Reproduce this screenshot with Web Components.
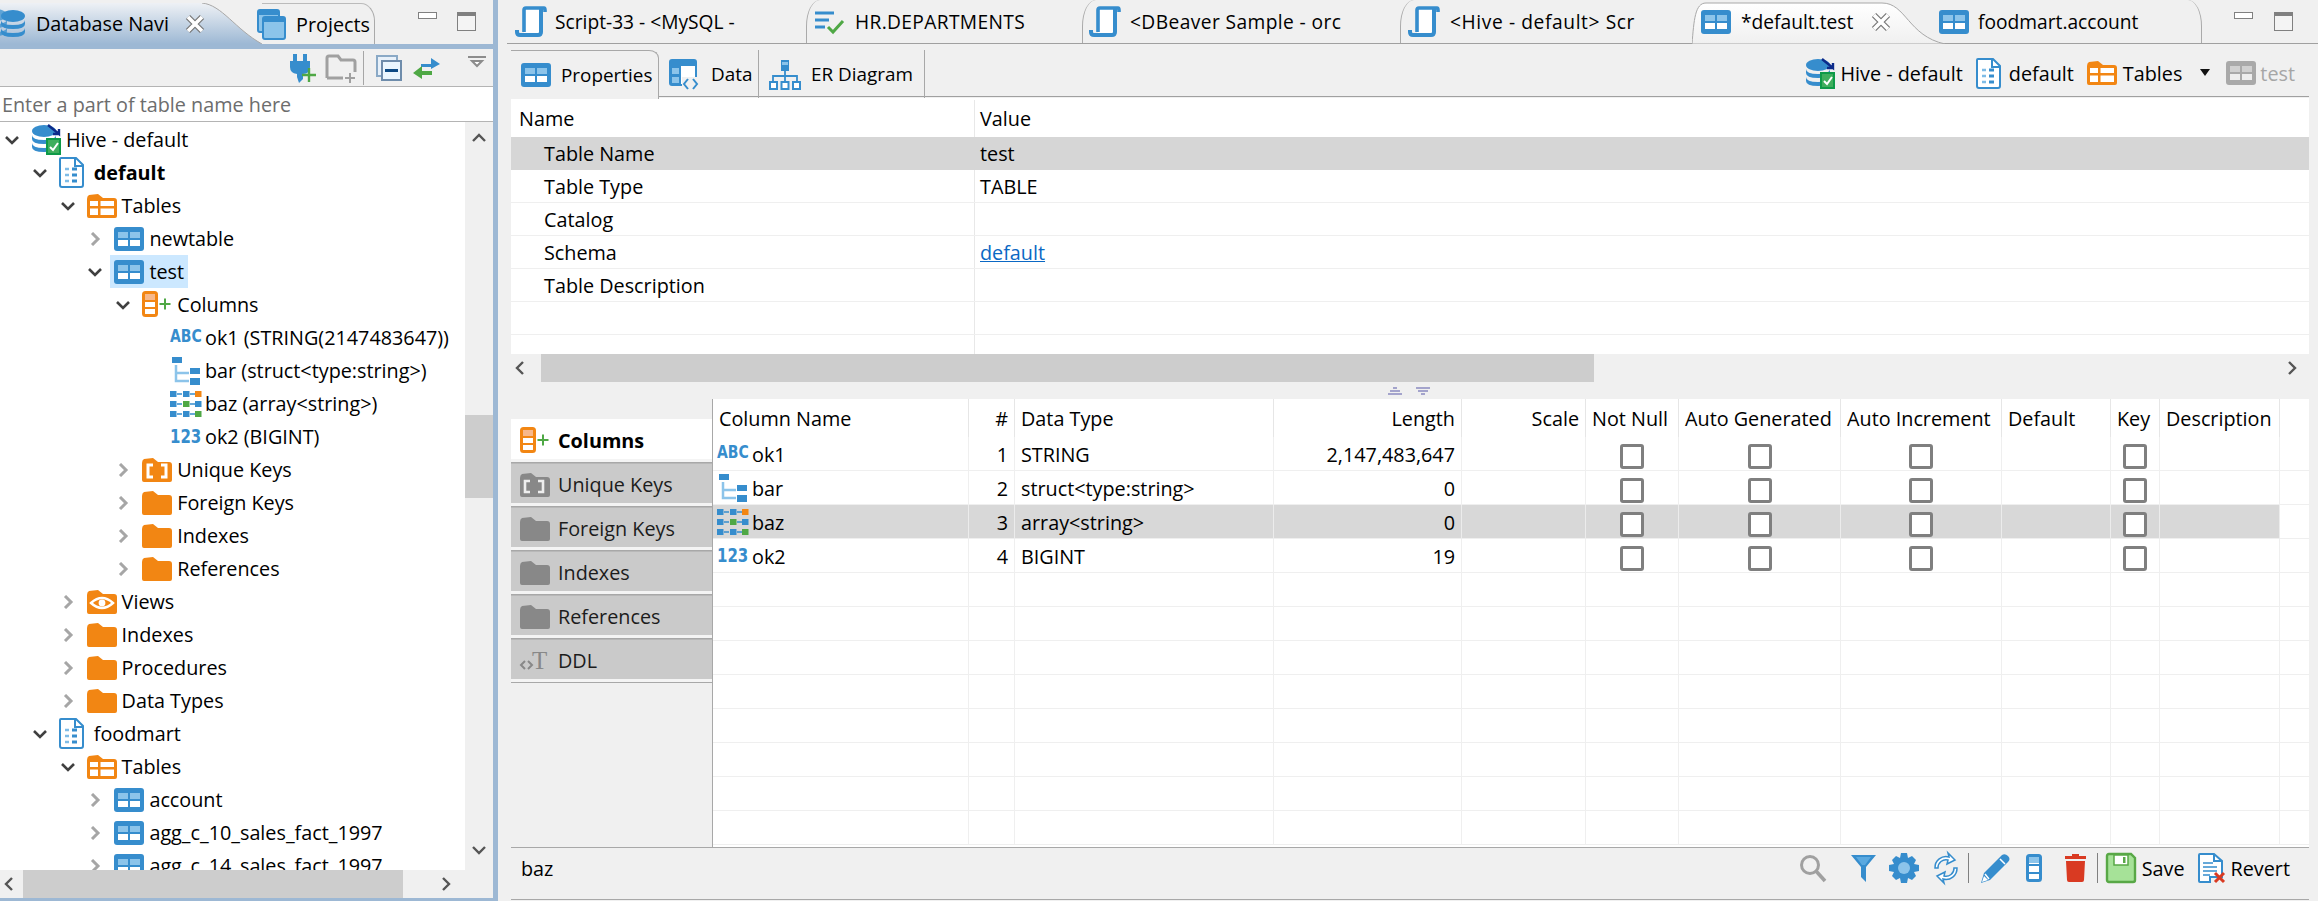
<!DOCTYPE html>
<html>
<head>
<meta charset="utf-8">
<style>
  html, body { margin:0; padding:0; }
  body {
    width:2318px; height:901px; overflow:hidden; display:flex;
    background:#f0f0f0; color:#000;
    font-family:"Open Sans","Noto Sans","Liberation Sans",sans-serif;
    font-size:19.8px;
  }
</style>
</head>
<body>
<nav-pane></nav-pane>
<editor-pane></editor-pane>

<script>
// icons: [width, height, markup]
const B = '#368dcd', O = '#f28613', G = '#4fa845';
const tableCells = (top, bottom) => `<rect x="4" y="5" width="10" height="6" fill="${top}"/><rect x="16" y="5" width="10" height="6" fill="${top}"/><rect x="4" y="13" width="10" height="6" fill="${bottom}"/><rect x="16" y="13" width="10" height="6" fill="${bottom}"/>`;
const folder = c => `<path d="M0 5Q0 2 2 1L11 0L16 4H27Q30 4 30 7V22Q30 24 28 24H2Q0 24 0 22Z" fill="${c}"/>`;
const stack = `<rect x="1.5" y="1.5" width="13" height="23" rx="2" fill="#fff" stroke="${O}" stroke-width="3"/><rect x="3" y="3" width="10" height="6" fill="#f7b88a"/><rect x="2" y="9" width="12" height="2" fill="${O}"/><rect x="2" y="16" width="12" height="2" fill="${O}"/>`;
const plus = (x, y, c, s=11, w=2) => `<path d="M${x-s/2} ${y}H${x+s/2}M${x} ${y-s/2}V${y+s/2}" stroke="${c}" stroke-width="${w}" fill="none"/>`;
const cyl = `<ellipse cx="13" cy="7" rx="12" ry="6" fill="${B}"/><path d="M1 11Q1 16 13 16T25 11V15Q25 20 13 20T1 15ZM1 19Q1 24 13 24T25 19V23Q25 28 13 28T1 23Z" fill="${B}"/>`;
const db = cyl + `<path d="M17 1L28 10V5M28 10H22" stroke="#0c2a8a" stroke-width="2.4" fill="none"/><rect x="16" y="15" width="13" height="15" fill="#3fae5d" stroke="#0e9a48" stroke-width="2"/><path d="M19 23l3 3 5-7" stroke="#fff" stroke-width="2" fill="none"/>`;
const doc = `<path d="M2 1H17L24 8V28Q24 30 22 30H3Q1 30 1 28V2Q1 1 2 1Z" fill="#fff" stroke="${B}" stroke-width="2"/><path d="M16 1V9H24" fill="none" stroke="${B}" stroke-width="2"/><path d="M6 12H10M6 18H10M6 24H10" stroke="#7fbce6" stroke-width="2.5"/><path d="M13 12H18M13 18H18M13 24H18" stroke="${B}" stroke-width="3"/>`;
const script = `<path d="M8 4Q8 2 10 2H27V29H8Z" fill="#fff"/><path d="M8 26V4Q8 2 10 2H28Q29 2 29 4V6" fill="none" stroke="${B}" stroke-width="3.6"/><path d="M25 3V26Q25 29 22 29H4Q1 29 1 26V24" fill="none" stroke="${B}" stroke-width="4"/>`;

const ICONS = {
  table:[30,24,`<rect width="30" height="24" rx="3" fill="${B}"/>`+tableCells('#8cc4ea','#fff')],
  tableGray:[30,24,`<rect width="30" height="24" rx="3" fill="#a9a9a9"/>`+tableCells('#d0d0d0','#eee')],
  folder:[30,24,folder(O)],
  folderGray:[28,24,folder('#888')],
  tables:[30,24,folder(O)+`<rect x="3" y="7" width="24" height="14" fill="#fff"/><rect x="3" y="12" width="24" height="2.5" fill="${O}"/><rect x="11" y="7" width="2.5" height="14" fill="${O}"/>`],
  views:[30,24,folder(O)+`<path d="M4 13Q15 3 26 13Q15 23 4 13Z" fill="none" stroke="#fff" stroke-width="2.4"/><circle cx="15" cy="13" r="3.4" fill="#fff"/>`],
  unique:[30,24,folder(O)+`<path d="M11 7H6V19H11M19 7H24V19H19" fill="none" stroke="#fff" stroke-width="3"/>`],
  uniqueGray:[28,24,folder('#888')+`<path d="M10 8H5V19H10M18 8H23V19H18" fill="none" stroke="#eee" stroke-width="2.6"/>`],
  columns:[30,27,stack+plus(23,13,G)],
  db:[30,31,db],
  dbPlain:[36,31,`<g transform="translate(-8,0)" fill-opacity=".75">${cyl}</g><g transform="translate(10,1)">${cyl}</g>`],
  doc:[25,31,doc],
  abc:[32,20,`<text transform="scale(1,1.3)" x="0" y="10.8" font-family="DejaVu Sans,sans-serif" font-weight="700" font-size="14" fill="${B}">ABC</text>`],
  num:[32,22,`<text transform="scale(1,1.25)" x="0" y="13.6" font-family="DejaVu Sans,sans-serif" font-weight="700" font-size="15" fill="${B}">123</text>`],
  struct:[30,28,`<rect x="2" y="0" width="10" height="6" fill="${B}"/><path d="M6 8V24H19M6 16H19" stroke="#8cc4ea" stroke-width="2.5" fill="none"/><rect x="20" y="11" width="10" height="6" fill="${B}"/><rect x="20" y="21" width="10" height="7" fill="${B}"/>`],
  array:[32,26,[0,10,20].map((y,i)=>[0,13,25].map((x,j)=>`<rect x="${x}" y="${y}" width="6.5" height="6" fill="${(i==0&&j==2)?O:(i==1&&j==1)||(i==2&&j==2)?G:B}"/>`).join('')+`<path d="M7 ${y+3}H12M20 ${y+3}H25" stroke="${B}" stroke-width="1.6"/>`).join('')],
  plug:[27,30,`<path d="M5 1V8M15 1V8" stroke="${B}" stroke-width="4"/><path d="M0 8H20V14Q20 21 13 21V26L9 30L7 24V21Q0 20 0 14Z" fill="${B}"/>`+plus(19,22,G,14,2.4)],
  folderAdd:[32,28,`<path d="M2 24V4Q2 2 4 2H13L16 6H28Q30 6 30 8V18M2 24H18" fill="none" stroke="#a0a0a0" stroke-width="3"/>`+plus(25,24,'#a0a0a0',10,2)],
  collapse:[26,26,`<rect x="1" y="1" width="20" height="20" fill="#e8f1fa" stroke="#8aa9c6" stroke-width="2"/><rect x="6" y="6" width="19" height="19" fill="#eaf6fe" stroke="#6e8cab" stroke-width="2"/><rect x="9" y="14" width="13" height="3" fill="#0d4a84"/>`],
  link:[30,22,`<path d="M10 8H20V2L29 8L20 13V11H10Z" fill="${B}" transform="translate(-1,-1)"/><path d="M20 14H10V9L1 16L10 22V18H20Z" fill="${G}"/>`],
  hdr:[18,10,`<path d="M0 1H18M4 5H14L9 10Z" stroke="#8c8c8c" stroke-width="2" fill="#fff"/>`],
  hrcheck:[32,24,`<path d="M1 3H20M1 10H15M1 17H11" stroke="${B}" stroke-width="3"/><path d="M14 17l5 5 10-11" stroke="${G}" stroke-width="3" fill="none"/>`],
  script:[30,31,script],
  projects:[29,31,`<rect x="1" y="1" width="21" height="22" rx="2" fill="#8cc4ea" stroke="${B}" stroke-width="2"/><rect x="1" y="1" width="21" height="5" fill="${B}"/><rect x="6" y="8" width="22" height="22" rx="2" fill="#8cc4ea" stroke="${B}" stroke-width="2"/><rect x="6" y="8" width="22" height="5" fill="${B}"/>`],
  data:[30,31,`<rect x="1" y="1" width="26" height="25" rx="2" fill="#fff" stroke="${B}" stroke-width="2"/><rect x="1" y="1" width="26" height="6" fill="${B}"/><rect x="1" y="1" width="11" height="25" fill="${B}"/><rect x="3" y="9" width="7" height="6" fill="#8cc4ea"/><rect x="3" y="18" width="7" height="6" fill="#8cc4ea"/><rect x="13" y="18" width="17" height="13" fill="#f0f0f0"/><path d="M19 20l-4 5 4 5M24 20l4 5-4 5" fill="none" stroke="${B}" stroke-width="2"/>`],
  er:[32,31,`<path d="M12 1H20V12H12Z" fill="${B}"/><path d="M13 3H19V6H13Z" fill="#8cc4ea"/><path d="M16 12V17M4 23V17H28V23M16 17V23" stroke="${B}" stroke-width="1.8" fill="none"/>`+[0,11.5,23].map(x=>`<rect x="${x+1}" y="23" width="7" height="7" fill="#fff" stroke="${B}" stroke-width="2"/>`).join('')],
  close:[20,20,`<path d="M3 3L17 17M17 3L3 17" stroke="#777" stroke-width="6"/><path d="M3 3L17 17M17 3L3 17" stroke="#fff" stroke-width="3.6"/>`],
  search:[27,28,`<circle cx="11" cy="11" r="8.5" fill="none" stroke="#a0a0a0" stroke-width="3"/><path d="M17 17L26 27" stroke="#a0a0a0" stroke-width="3.6"/>`],
  filter:[25,28,`<path d="M0 1H25L15 13V28L10 23V13Z" fill="${B}"/><path d="M5 3H20L14 11H11Z" fill="#5aa9e0"/>`],
  gear:[30,30,`<path d="M12 0H18L19 5L23 3L27 7L25 11L30 12V18L25 19L27 23L23 27L19 25L18 30H12L11 25L7 27L3 23L5 19L0 18V12L5 11L3 7L7 3L11 5Z" fill="${B}"/><circle cx="15" cy="15" r="6" fill="#8cc4ea"/>`],
  refresh:[28,30,`<path d="M3 15A11 11 0 0 1 17 4L16 0L23 7L15 11L16 7A8 8 0 0 0 6 15Z M25 15A11 11 0 0 1 11 26L12 30L5 23L13 19L12 23A8 8 0 0 0 22 15Z" fill="#fff" stroke="${B}" stroke-width="1.5"/>`],
  pencil:[30,31,`<path d="M1 30L4 20L22 2Q25 0 28 3T28 9L10 27Z" fill="${B}"/><path d="M5 21L9 26M20 6L25 11" stroke="#fff" stroke-width="1.5"/><path d="M2 29L4 23L8 27Z" fill="#fff"/>`],
  columnBlue:[16,28,`<rect x="1.5" y="1.5" width="13" height="25" rx="2" fill="#fff" stroke="${B}" stroke-width="3"/><rect x="3" y="3" width="10" height="6" fill="#8cc4ea"/><rect x="2" y="10" width="12" height="2" fill="${B}"/><rect x="2" y="18" width="12" height="2" fill="${B}"/>`],
  trash:[21,28,`<rect x="0" y="2" width="21" height="3" fill="#d93a22"/><rect x="7" y="0" width="7" height="3" fill="#d93a22"/><path d="M1 7H20L19 26Q19 28 17 28H4Q2 28 2 26Z" fill="#d93a22"/>`],
  save:[30,30,`<path d="M1 3Q1 1 3 1H25L29 5V27Q29 29 27 29H3Q1 29 1 27Z" fill="#a6e298" stroke="#58a846" stroke-width="2.4"/><rect x="8" y="2" width="14" height="10" fill="#fff" stroke="#58a846" stroke-width="1.5"/><rect x="17" y="4" width="2.5" height="6" fill="#58a846"/>`],
  revert:[27,30,`<path d="M1 2Q1 1 2 1H16L24 8V24H12V29H2Q1 29 1 28Z" fill="#fff" stroke="${B}" stroke-width="2"/><path d="M16 1V8H24" fill="none" stroke="${B}" stroke-width="2"/><path d="M5 10H15M5 14H19M5 18H19M5 22H12" stroke="${B}" stroke-width="1.6"/><path d="M17 20L26 29M26 20L17 29" stroke="#d93a22" stroke-width="3"/>`],
  ddl:[28,22,`<path d="M5 11L1 15L5 19M8 11L12 15L8 19" fill="none" stroke="#888" stroke-width="2"/><text x="12" y="19" font-family="Liberation Serif,serif" font-size="25" fill="#888">T</text>`],
  sashUp:[14,8,`<path d="M0 7H14M2 4H12M5 1H9" stroke="#8a8ac0" stroke-width="1.5"/>`],
  sashDown:[14,8,`<path d="M0 1H14M2 4H12M5 7H9" stroke="#8a8ac0" stroke-width="1.5"/>`]
};

class DbIcon extends HTMLElement {
  connectedCallback() {
    const [w, h, body] = ICONS[this.getAttribute('name')];
    this.attachShadow({ mode:'open' });
    this.shadowRoot.innerHTML = `<style>:host{display:inline-flex;flex:none}svg{display:block;overflow:visible}</style>
      <svg width="${w}" height="${h}" viewBox="0 0 ${w} ${h}">${body}</svg>`;
  }
}
customElements.define('db-icon', DbIcon);

// tree row: level, twisty (open/closed), icon
class TreeRow extends HTMLElement {
  connectedCallback() {
    const lvl = +this.getAttribute('level');
    const tw = this.getAttribute('twisty');
    const sel = this.hasAttribute('selected');
    const arrow = tw == 'open'
      ? '<path d="M1 4L7 10L13 4" stroke="#404040" stroke-width="2.6" fill="none"/>'
      : tw == 'closed' ? '<path d="M4 1L10 7L4 13" stroke="#a6a6a6" stroke-width="3" fill="none"/>' : '';
    this.attachShadow({ mode:'open' });
    this.shadowRoot.innerHTML = `<style>
      :host{display:flex;align-items:center;height:33px;white-space:nowrap;padding-left:${5 + lvl * 27.8}px}
      .tw{width:14px;height:14px;margin-right:12px;flex:none}
      .ic{width:32px;display:flex;align-items:center;justify-content:flex-start;flex:none;margin-right:3px}
      .t{font-weight:${this.hasAttribute('bold')?700:400};padding:0}
      .w{display:flex;align-items:center;height:33px;${sel?'background:#cce8ff;margin-left:-4px;padding:0 4px;':''}}
    </style>
    <svg class="tw" viewBox="0 0 14 14">${arrow}</svg>
    <div class="w"><div class="ic"><db-icon name="${this.getAttribute('icon')}"></db-icon></div><span class="t"><slot></slot></span></div>`;
  }
}
customElements.define('tree-row', TreeRow);

class ScrollBar extends HTMLElement {
  connectedCallback() {
    const v = this.hasAttribute('vertical');
    const a = +this.getAttribute('start'), b = +this.getAttribute('end');
    this.attachShadow({ mode:'open' });
    const arrows = v
      ? ['M1 9L7 3L13 9','M1 3L7 9L13 3']
      : ['M9 1L3 7L9 13','M3 1L9 7L3 13'];
    this.shadowRoot.innerHTML = `<style>
      :host{display:block;position:relative;background:#f0f0f0;flex:none;${v?'width:28px':'height:28px'}}
      .thumb{position:absolute;background:#cdcdcd;${v?`left:0;right:0;top:${a}px;height:${b-a}px`:`top:0;bottom:0;left:${a}px;width:${b-a}px`}}
      svg{position:absolute;width:14px;height:14px}
      .one{${v?'top:10px;left:7px':'left:3px;top:7px'}}
      .two{${v?'bottom:12px;left:7px':`left:${this.getAttribute('arrow')}px;top:7px`}}
    </style><div class="thumb"></div>
    <svg class="one" viewBox="0 0 14 14"><path d="${arrows[0]}" fill="none" stroke="#555" stroke-width="2.4"/></svg>
    <svg class="two" viewBox="0 0 14 14"><path d="${arrows[1]}" fill="none" stroke="#555" stroke-width="2.4"/></svg>`;
  }
}
customElements.define('scroll-bar', ScrollBar);

class NavPane extends HTMLElement {
  constructor() {
    super();
    this.attachShadow({ mode:'open' });
    this.shadowRoot.innerHTML = `<style>
      :host{display:flex;flex-direction:column;width:493px;height:898px;flex:none;border-right:5px solid #9db8d4;border-bottom:3px solid #9db8d4;background:#f0f0f0}
      .tabs{height:41px;margin-top:3px;display:flex;position:relative;flex:none;align-items:center;overflow:hidden}
      .tabs svg.bg{position:absolute;left:0;top:0;width:267px;height:41px}
      .active{position:relative;width:262px;display:flex;align-items:center;box-sizing:border-box;height:41px;white-space:nowrap}
      .active span{margin-left:10px}
      .active db-icon:first-child{margin-left:-10px}
      .x{margin-left:16px}
      .proj{display:flex;align-items:center;height:41px;width:113px;box-sizing:border-box;border-right:1px solid #aaa;border-top-right-radius:14px 18px;border-top:1px solid #bbb}
      .proj span{margin-left:10px}
      .min,.max{position:absolute;border:1px solid #808080;background:#fff;box-sizing:border-box}
      .min{left:418px;top:9px;width:19px;height:7px}
      .max{left:457px;top:9px;width:19px;height:19px;border-top-width:4px;background:#f4f4f4}
      .edge{height:5px;background:#9db8d4;flex:none}
      .tools{height:38px;flex:none;display:flex;align-items:center;position:relative;box-sizing:border-box;border-bottom:1px solid #b4b4b4;padding-left:290px}
      .sep{width:1px;height:34px;background:#a6a6a6;margin:0 12px 0 6px}
      .filter{height:35px;background:#fff;flex:none;display:flex;align-items:center;color:#6d6d6d;padding-left:2px;border-bottom:1px solid #b4b4b4;box-sizing:border-box}
      .mid{flex:1;display:flex;min-height:0;background:#fff}
      .tree{flex:1;overflow:hidden;padding-top:1px}
      .hs{flex:none}
    </style>
    <div class="tabs">
      <svg class="bg" viewBox="0 0 267 41"><defs><linearGradient id="g" x1="0" y1="0" x2="0" y2="1"><stop offset="0" stop-color="#eef1f5"/><stop offset="1" stop-color="#9db8d4"/></linearGradient></defs>
        <path d="M0 0H202C222 2 235 26 262 41H0Z" fill="url(#g)"/><path d="M202 0C222 2 235 26 262 41" fill="none" stroke="#a8a8a8"/></svg>
      <div class="active"><db-icon name="dbPlain"></db-icon><span>Database Navi</span><db-icon class="x" name="close"></db-icon></div>
      <div class="proj"><db-icon name="projects" style="margin-left:-5px"></db-icon><span>Projects</span></div>
      <div class="min"></div><div class="max"></div>
    </div>
    <div class="edge"></div>
    <div class="tools">
      <db-icon name="plug"></db-icon><db-icon name="folderAdd" style="margin-left:8px"></db-icon>
      <div class="sep"></div><db-icon name="collapse"></db-icon><db-icon name="link" style="margin-left:10px"></db-icon>
      <db-icon name="hdr" style="margin:-14px 0 0 26px"></db-icon>
    </div>
    <div class="filter">Enter a part of table name here</div>
    <div class="mid">
      <div class="tree">
        <tree-row level="0" twisty="open" icon="db">Hive - default</tree-row>
        <tree-row level="1" twisty="open" icon="doc" bold>default</tree-row>
        <tree-row level="2" twisty="open" icon="tables">Tables</tree-row>
        <tree-row level="3" twisty="closed" icon="table">newtable</tree-row>
        <tree-row level="3" twisty="open" icon="table" selected>test</tree-row>
        <tree-row level="4" twisty="open" icon="columns">Columns</tree-row>
        <tree-row level="5" icon="abc">ok1 (STRING(2147483647))</tree-row>
        <tree-row level="5" icon="struct">bar (struct&lt;type:string&gt;)</tree-row>
        <tree-row level="5" icon="array">baz (array&lt;string&gt;)</tree-row>
        <tree-row level="5" icon="num">ok2 (BIGINT)</tree-row>
        <tree-row level="4" twisty="closed" icon="unique">Unique Keys</tree-row>
        <tree-row level="4" twisty="closed" icon="folder">Foreign Keys</tree-row>
        <tree-row level="4" twisty="closed" icon="folder">Indexes</tree-row>
        <tree-row level="4" twisty="closed" icon="folder">References</tree-row>
        <tree-row level="2" twisty="closed" icon="views">Views</tree-row>
        <tree-row level="2" twisty="closed" icon="folder">Indexes</tree-row>
        <tree-row level="2" twisty="closed" icon="folder">Procedures</tree-row>
        <tree-row level="2" twisty="closed" icon="folder">Data Types</tree-row>
        <tree-row level="1" twisty="open" icon="doc">foodmart</tree-row>
        <tree-row level="2" twisty="open" icon="tables">Tables</tree-row>
        <tree-row level="3" twisty="closed" icon="table">account</tree-row>
        <tree-row level="3" twisty="closed" icon="table">agg_c_10_sales_fact_1997</tree-row>
        <tree-row level="3" twisty="closed" icon="table">agg_c_14_sales_fact_1997</tree-row>
      </div>
      <scroll-bar vertical start="293" end="376"></scroll-bar>
    </div>
    <scroll-bar class="hs" start="23" end="403" arrow="440"></scroll-bar>`;
  }
}
customElements.define('nav-pane', NavPane);

class EditorTab extends HTMLElement {
  connectedCallback() {
    const active = this.hasAttribute('active');
    const w = this.getAttribute('width');
    this.attachShadow({ mode:'open' });
    this.shadowRoot.innerHTML = `<style>
      :host{display:flex;align-items:center;height:43px;width:${w}px;box-sizing:border-box;flex:none;position:relative;white-space:nowrap;font-size:19.2px;
        padding-left:${this.getAttribute('pad')||9}px;${this.hasAttribute('edge')?'border-left:1px solid #aaa;border-top-left-radius:14px 26px;':''}}
      span{margin-left:${this.getAttribute('gap')||9}px;position:relative}
      db-icon{position:relative}
      svg.bg{position:absolute;left:0;top:0}
      .x{margin-left:18px}
    </style>
    ${active?`<svg class="bg" width="254" height="44" viewBox="0 0 254 44"><defs><linearGradient id="t" x1="0" y1="0" x2="0" y2="1"><stop offset="0" stop-color="#fff"/><stop offset="1" stop-color="#f0f0f0"/></linearGradient></defs>
      <path d="M0 44C2 20 3 3 14 3H190C214 3 216 36 253 44Z" fill="url(#t)" stroke="#a8a8a8"/></svg>`:''}
    <db-icon name="${this.getAttribute('icon')}"></db-icon><span><slot></slot></span>
    ${active?'<db-icon class="x" name="close"></db-icon>':''}`;
  }
}
customElements.define('editor-tab', EditorTab);

class SubTab extends HTMLElement {
  connectedCallback() {
    const active = this.hasAttribute('active');
    this.attachShadow({ mode:'open' });
    this.shadowRoot.innerHTML = `<style>
      :host{display:flex;align-items:center;box-sizing:border-box;height:48px;width:${this.getAttribute('width')}px;padding-left:10px;border-right:1px solid #a8a8a8;font-size:18.9px;
        ${active?'border-top:1px solid #a8a8a8;border-top-right-radius:10px 8px;height:49px;margin-bottom:-1px;background:#f0f0f0;position:relative;':''}}
      span{margin-left:${this.getAttribute('gap')||10}px}
    </style><db-icon name="${this.getAttribute('icon')}"></db-icon><span><slot></slot></span>`;
  }
}
customElements.define('sub-tab', SubTab);

class Crumb extends HTMLElement {
  connectedCallback() {
    this.attachShadow({ mode:'open' });
    this.shadowRoot.innerHTML = `<style>:host{display:flex;align-items:center;margin-left:${this.getAttribute('ml')||0}px;color:${this.getAttribute('color')||'inherit'}}
      span{margin-left:${this.getAttribute('gap')||8}px}</style>
      <db-icon name="${this.getAttribute('icon')}"></db-icon><span><slot></slot></span>`;
  }
}
customElements.define('crumb-item', Crumb);

class PropsTable extends HTMLElement {
  constructor() {
    super();
    this.attachShadow({ mode:'open' });
    const rows = [['Table Name','test'],['Table Type','TABLE'],['Catalog',''],['Schema','<a>default</a>'],['Table Description',''],['',''],['','']];
    this.shadowRoot.innerHTML = `<style>
      :host{display:block;background:#fff;height:256px;overflow:hidden;flex:none}
      .r{display:grid;grid-template-columns:464px 1fr;height:33px;align-items:center;box-sizing:border-box;border-bottom:1px solid #efefef}
      .h{height:39px;border-bottom:0;padding-top:2px}
      .r>div{height:100%;display:flex;align-items:center;box-sizing:border-box}
      .r>div:first-child{padding-left:33px;border-right:1px solid #e8e8e8}
      .r>div:last-child{padding-left:5px}
      .h>div:first-child{padding-left:8px}
      .sel{background:#d6d6d6;border-bottom:0}
      .sel>div:first-child{border-right-color:#d6d6d6}
      a{color:#0a68c4;text-decoration:underline}
    </style>
    <div class="r h"><div>Name</div><div>Value</div></div>
    ${rows.map((r,i)=>`<div class="r${i==0?' sel':''}"><div>${r[0]}</div><div>${r[1]}</div></div>`).join('')}`;
  }
}
customElements.define('props-table', PropsTable);

class SideTab extends HTMLElement {
  connectedCallback() {
    const active = this.hasAttribute('active');
    this.attachShadow({ mode:'open' });
    this.shadowRoot.innerHTML = `<style>
      :host{display:flex;align-items:center;box-sizing:border-box;height:44px;padding-left:9px;flex:none;
        background:${active?'#fff':'#cacaca'};font-weight:${active?700:400};color:${active?'#000':'#1c1c1c'};
        border-bottom:1px solid #a8a8a8;box-shadow:inset 0 -3px 0 #f4f4f4${active?'':', inset 0 1px 0 #b8b8b8'};}
      .ic{width:38px;display:flex}
    </style><div class="ic"><db-icon name="${this.getAttribute('icon')}"></db-icon></div><span><slot></slot></span>`;
  }
}
customElements.define('side-tab', SideTab);

class ColumnsTable extends HTMLElement {
  constructor() {
    super();
    this.attachShadow({ mode:'open' });
    const widths = [256,46,259,188,124,93,162,161,109,49,120,30];
    const head = [['Column Name'],['#','r'],['Data Type'],['Length','r'],['Scale','r'],['Not Null'],['Auto Generated'],['Auto Increment'],['Default'],['Key'],['Description'],['']];
    const data = [
      ['abc','ok1','1','STRING','2,147,483,647'],
      ['struct','bar','2','struct&lt;type:string&gt;','0'],
      ['array','baz','3','array&lt;string&gt;','0'],
      ['num','ok2','4','BIGINT','19']
    ];
    const box = '<div class="cb"></div>';
    let rows = '';
    for (let i = 0; i < 12; i++) {
      const d = data[i];
      const cells = d
        ? [`<db-icon name="${d[0]}"></db-icon><span class="n">${d[1]}</span>`,d[2],d[3],d[4],'',box,box,box,'',box,'','']
        : Array(12).fill('');
      rows += cells.map((c,j)=>{
        const cl = ['c'];
        if (j==1||j==3||j==4) cl.push('r');
        if (j==5||j==6||j==7||j==9) cl.push('m');
        if (j==0) cl.push('first');
        if (i==2 && j<11) cl.push('sel');
        if (j==11) cl.push('tail');
        return `<div class="${cl.join(' ')}">${c}</div>`;
      }).join('');
    }
    this.shadowRoot.innerHTML = `<style>
      :host{display:grid;grid-template-columns:${widths.map(w=>w+'px').join(' ')};grid-auto-rows:34px;background:#fff;border-left:1px solid #a8a8a8;box-sizing:border-box;width:1598px;white-space:nowrap;overflow:hidden}
      .h{height:38px;display:flex;align-items:center;padding:0 6px;box-sizing:border-box;border-right:1px solid #e6e6e6;white-space:nowrap}
      .h.r{justify-content:flex-end}
      .c{display:flex;align-items:center;box-sizing:border-box;padding:2px 6px 0;border-right:1px solid #efefef;border-bottom:1px solid #efefef;height:34px}
      .c.r{justify-content:flex-end}
      .c.m{justify-content:center;padding:0}
      .c.first{padding-left:4px}
      .c.first db-icon{width:35px;margin-top:-2px}
      .c.sel{background:#d8d8d8;border-bottom-color:#efefef;border-right-color:#ececec}
      .c.tail{border-right:0}
      .cb{width:24px;height:25px;box-sizing:border-box;border:3px solid #7f7f7f;border-radius:3px;background:#fff;margin-top:5px}
      .top{grid-column:1/-1;display:grid;grid-template-columns:inherit;height:38px}
    </style>
    <div class="top">${head.map(h=>`<div class="h ${h[1]||''}">${h[0]}</div>`).join('')}</div>
    ${rows}`;
    this.style.gridTemplateRows = '38px';
  }
}
customElements.define('columns-table', ColumnsTable);

class StatusBar extends HTMLElement {
  constructor() {
    super();
    this.attachShadow({ mode:'open' });
    this.shadowRoot.innerHTML = `<style>
      :host{display:flex;align-items:center;height:53px;flex:none;box-sizing:border-box;border-top:1px solid #a8a8a8;border-bottom:1px solid #a8a8a8;margin-bottom:1px;padding:0 0 11px 10px}
      .txt{flex:1}
      .s{width:1px;height:30px;background:#808080}
      .items{display:flex;align-items:center;padding-right:19px}
      .i{display:flex;align-items:center}
      .i span{margin-left:6px}
    </style>
    <div class="txt">baz</div>
    <div class="items">
      <db-icon name="search"></db-icon><db-icon name="filter" style="margin-left:25px"></db-icon>
      <db-icon name="gear" style="margin-left:13px"></db-icon><db-icon name="refresh" style="margin-left:13px"></db-icon>
      <div class="s" style="margin:0 11px 0 8px"></div>
      <db-icon name="pencil"></db-icon><db-icon name="columnBlue" style="margin-left:16px"></db-icon>
      <db-icon name="trash" style="margin-left:23px"></db-icon>
      <div class="s" style="margin:0 8px 0 11px"></div>
      <div class="i"><db-icon name="save"></db-icon><span>Save</span></div>
      <div class="i" style="margin-left:13px"><db-icon name="revert"></db-icon><span>Revert</span></div>
    </div>`;
  }
}
customElements.define('status-bar', StatusBar);

class EditorPane extends HTMLElement {
  constructor() {
    super();
    this.attachShadow({ mode:'open' });
    this.shadowRoot.innerHTML = `<style>
      :host{display:flex;flex-direction:column;flex:none;width:1802px;margin-left:9px;margin-right:9px;height:901px}
      .tabs{display:flex;height:44px;flex:none;box-sizing:border-box;border-bottom:1px solid #a0a0a0;position:relative;width:1811px}
      .min,.max{position:absolute;border:1px solid #808080;background:#fff;box-sizing:border-box}
      .min{left:1727px;top:12px;width:19px;height:7px}
      .max{left:1767px;top:12px;width:19px;height:19px;border-top-width:4px;background:#f4f4f4}
      .body{margin-left:4px;flex:1;display:flex;flex-direction:column;min-height:0}
      .sub{display:flex;height:47px;margin-top:6px;flex:none;box-sizing:border-box;border-bottom:1px solid #a0a0a0;width:1798px;align-items:flex-start}
      .crumbs{margin-left:auto;display:flex;align-items:center;height:46px;padding-right:14px}
      .arrow{width:0;height:0;border:5px solid transparent;border-top:7px solid #111;margin:3px 16px 0 18px}
      .gap{height:1px;flex:none}
      .sash{height:17px;flex:none;display:flex;justify-content:flex-start;align-items:center;gap:14px;padding-left:877px}
      .lower{flex:1;display:flex;min-height:0}
      .side{width:201px;flex:none;display:flex;flex-direction:column;padding-top:20px;box-sizing:border-box}
      scroll-bar{width:1798px}
    </style>
    <div class="tabs">
      <editor-tab width="299" icon="script" pad="9">Script-33 - &lt;MySQL -</editor-tab>
      <editor-tab width="276" icon="hrcheck" edge pad="7" gap="9" style="letter-spacing:.35px">HR.DEPARTMENTS</editor-tab>
      <editor-tab width="318" icon="script" edge pad="7" gap="10" style="letter-spacing:.4px">&lt;DBeaver Sample - orc</editor-tab>
      <editor-tab width="292" icon="script" edge pad="8" gap="11" style="letter-spacing:.6px">&lt;Hive - default&gt; Scr</editor-tab>
      <editor-tab width="247" icon="table" active pad="9" gap="10">*default.test</editor-tab>
      <editor-tab width="263" icon="table" pad="0" gap="9" style="border-right:1px solid #aaa;border-top-right-radius:14px 26px">foodmart.account</editor-tab>
      <div class="min"></div><div class="max"></div>
    </div>
    <div class="body">
      <div class="sub">
        <sub-tab width="148" icon="table" active>Properties</sub-tab>
        <sub-tab width="100" icon="data" gap="12">Data</sub-tab>
        <sub-tab width="166" icon="er">ER Diagram</sub-tab>
        <div class="crumbs">
          <crumb-item icon="db" gap="6">Hive - default</crumb-item>
          <crumb-item icon="doc" ml="13">default</crumb-item>
          <crumb-item icon="tables" ml="13" gap="6">Tables</crumb-item>
          <div class="arrow"></div>
          <crumb-item icon="tableGray" gap="4" color="#a6a6a6">test</crumb-item>
        </div>
      </div>
      <div class="gap"></div>
      <props-table></props-table>
      <scroll-bar start="30" end="1083" arrow="1775"></scroll-bar>
      <div class="sash"><db-icon name="sashUp"></db-icon><db-icon name="sashDown"></db-icon></div>
      <div class="lower">
        <div class="side">
          <side-tab icon="columns" active>Columns</side-tab>
          <side-tab icon="uniqueGray">Unique Keys</side-tab>
          <side-tab icon="folderGray">Foreign Keys</side-tab>
          <side-tab icon="folderGray">Indexes</side-tab>
          <side-tab icon="folderGray">References</side-tab>
          <side-tab icon="ddl">DDL</side-tab>
        </div>
        <columns-table></columns-table>
      </div>
      <status-bar></status-bar>
    </div>`;
  }
}
customElements.define('editor-pane', EditorPane);
</script>
</body>
</html>
